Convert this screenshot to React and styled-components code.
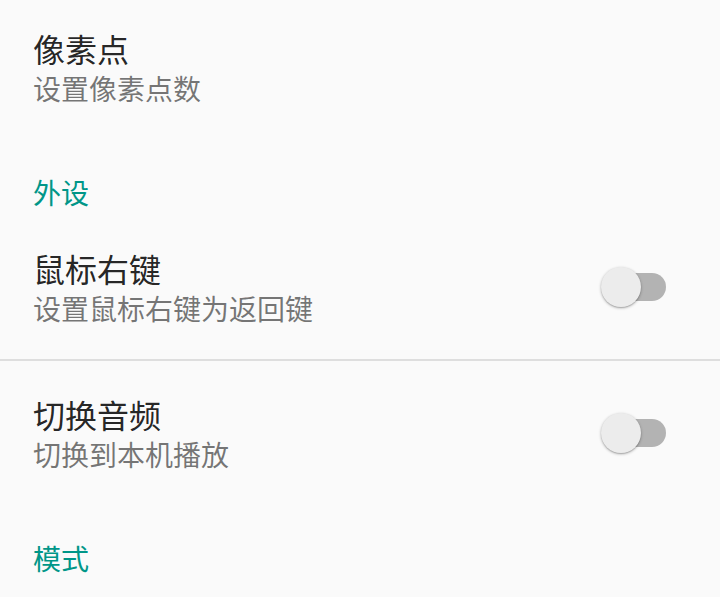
import React from "react";
import styled, { createGlobalStyle } from "styled-components";

const Global = createGlobalStyle`
  html, body {
    margin: 0;
    padding: 0;
    background: #fafafa;
    overflow: hidden;
  }
  body {
    font-family: "Noto Sans CJK SC", "Noto Sans", sans-serif;
  }
`;

const Screen = styled.div`
  width: 720px;
  height: 597px;
  background: #fafafa;
  overflow: hidden;
`;

const List = styled.div`
  display: flex;
  flex-direction: column;
  margin-top: -5px;
`;

const Row = styled.div`
  display: flex;
  align-items: center;
  padding: 32px 54px 32px 33px;
`;

const Texts = styled.div`
  flex: 1;
  display: flex;
  flex-direction: column;
  min-width: 0;
`;

const Title = styled.div`
  font-size: 32px;
  line-height: 42px;
  color: rgba(0, 0, 0, 0.87);
`;

const Summary = styled.div`
  font-size: 28px;
  line-height: 38px;
  color: rgba(0, 0, 0, 0.54);
`;

const Category = styled.div`
  padding: 35px 33px 5px;
  font-size: 28px;
  line-height: 36px;
  color: #009688;
`;

const Divider = styled.div`
  height: 2px;
  background: #dedede;
`;

const SwitchBox = styled.div`
  position: relative;
  width: 65px;
  height: 40px;
  flex-shrink: 0;
  display: flex;
  align-items: center;
  justify-content: flex-end;
`;

const Track = styled.div`
  width: 58px;
  height: 28px;
  border-radius: 14px;
  background: ${(p) => (p.$on ? "#80cbc4" : "#b3b3b3")};
`;

const Thumb = styled.div`
  position: absolute;
  top: 0;
  left: ${(p) => (p.$on ? "25px" : "0")};
  width: 40px;
  height: 40px;
  border-radius: 50%;
  background: ${(p) => (p.$on ? "#009688" : "#ececec")};
  box-shadow: 0 1px 3px rgba(0, 0, 0, 0.3), 0 1px 1px rgba(0, 0, 0, 0.12);
`;

function Switch({ on }) {
  return (
    <SwitchBox>
      <Track $on={on} />
      <Thumb $on={on} />
    </SwitchBox>
  );
}

function Pref({ title, summary, toggle }) {
  return (
    <Row>
      <Texts>
        <Title>{title}</Title>
        <Summary>{summary}</Summary>
      </Texts>
      {toggle !== undefined && <Switch on={toggle} />}
    </Row>
  );
}

export default function App() {
  return (
    <Screen>
      <Global />
      <List>
        <Pref title="像素点" summary="设置像素点数" />
        <Category>外设</Category>
        <Pref title="鼠标右键" summary="设置鼠标右键为返回键" toggle={false} />
        <Divider />
        <Pref title="切换音频" summary="切换到本机播放" toggle={false} />
        <Category>模式</Category>
      </List>
    </Screen>
  );
}
